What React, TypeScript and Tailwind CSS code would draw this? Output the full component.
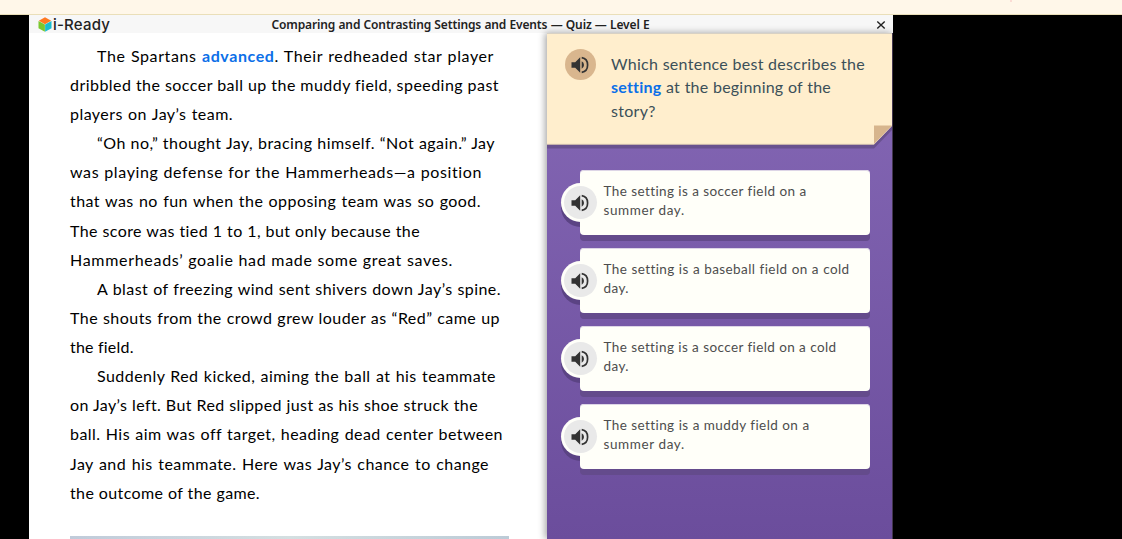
import React from 'react';

type Line = { text: string; width: string; indent?: boolean; bold?: string; tracking?: string };

const passage: Line[] = [
  { text: 'The Spartans |. Their redheaded star player', bold: 'advanced', width: 'w-[397px]', indent: true, tracking: 'tracking-[0.6px]' },
  { text: 'dribbled the soccer ball up the muddy field, speeding past', width: 'w-[429px]' },
  { text: 'players on Jay’s team.', width: 'w-[163px]' },
  { text: '“Oh no,” thought Jay, bracing himself. “Not again.” Jay', width: 'w-[398px]', indent: true },
  { text: 'was playing defense for the Hammerheads—a position', width: 'w-[412px]', tracking: 'tracking-[0.62px]' },
  { text: 'that was no fun when the opposing team was so good.', width: 'w-[411px]' },
  { text: 'The score was tied 1 to 1, but only because the', width: 'w-[350px]', tracking: 'tracking-[0.4px]' },
  { text: 'Hammerheads’ goalie had made some great saves.', width: 'w-[383px]', tracking: 'tracking-[0.7px]' },
  { text: 'A blast of freezing wind sent shivers down Jay’s spine.', width: 'w-[404px]', indent: true },
  { text: 'The shouts from the crowd grew louder as “Red” came up', width: 'w-[430px]' },
  { text: 'the field.', width: 'w-[63px]', tracking: 'tracking-[0.2px]' },
  { text: 'Suddenly Red kicked, aiming the ball at his teammate', width: 'w-[399px]', indent: true },
  { text: 'on Jay’s left. But Red slipped just as his shoe struck the', width: 'w-[408px]', tracking: 'tracking-[0.4px]' },
  { text: 'ball. His aim was off target, heading dead center between', width: 'w-[433px]' },
  { text: 'Jay and his teammate. Here was Jay’s chance to change', width: 'w-[419px]' },
  { text: 'the outcome of the game.', width: 'w-[190px]', tracking: 'tracking-[0.38px]' },
];

const question: Line[] = [
  { text: 'Which sentence best describes the', width: 'w-[254px]' },
  { text: '| at the beginning of the', bold: 'setting', width: 'w-[220px]', tracking: 'tracking-[0.2px]' },
  { text: 'story?', width: 'w-[44px]' },
];

const answers: Line[][] = [
  [
    { text: 'The setting is a soccer field on a', width: 'w-[203px]' },
    { text: 'summer day.', width: 'w-[81px]', tracking: 'tracking-[0.6px]' },
  ],
  [
    { text: 'The setting is a baseball field on a cold', width: 'w-[246px]' },
    { text: 'day.', width: 'w-[26px]' },
  ],
  [
    { text: 'The setting is a soccer field on a cold', width: 'w-[233px]' },
    { text: 'day.', width: 'w-[26px]' },
  ],
  [
    { text: 'The setting is a muddy field on a', width: 'w-[206px]' },
    { text: 'summer day.', width: 'w-[81px]', tracking: 'tracking-[0.6px]' },
  ],
];

const TextLine: React.FC<{ line: Line }> = ({ line }) => {
  const [before, after] = line.text.split('|');
  return (
    <span
      className={`block whitespace-nowrap [text-align-last:justify] ${line.width} ${line.indent ? 'ml-[27px]' : ''} ${line.tracking ?? ''}`}
    >
      {before}
      {line.bold && <b className="font-bold text-[#0b6fe8]">{line.bold}</b>}
      {after}
    </span>
  );
};

const Speaker: React.FC = () => (
  <svg viewBox="0 0 18 18" className="mr-[1px] size-[18px]" fill="#333333">
    <path d="M0.5 6.2H4.2L9.2 1.2V16.8L4.2 11.8H0.5Z" />
    <path d="M10.7 5.3Q13 6.6 13 9T10.7 12.7Z" />
    <path d="M10.7 1.7C14.5 2.3 16.6 5.2 16.6 9S14.5 15.7 10.7 16.3" fill="none" stroke="#333333" strokeWidth="1.7" />
  </svg>
);

const Logo: React.FC = () => (
  <div className="flex items-center">
    <svg viewBox="0 0 14 15" className="h-[15px] w-[14px]">
      <path d="M7 0.2L13.2 3.7L7 7.2L0.8 3.7Z" fill="#ff7920" />
      <path d="M0.5 4L6.9 7.5V14.7L0.5 11.2Z" fill="#7ac82e" />
      <path d="M13.5 4L7.1 7.5V14.7L13.5 11.2Z" fill="#19bdcf" />
    </svg>
    <span className="ml-[1px] font-[Inter] text-[15px] leading-[18px] font-medium tracking-[0.2px] text-[#222222]">
      i-Ready
    </span>
  </div>
);

const App: React.FC = () => {
  return (
    <div className="flex h-[539px] w-[1122px] flex-col overflow-hidden bg-black">
      <div className="h-[15px] shrink-0 border-b border-[#eadfb9] bg-[#fff7e9]">
        <div className="ml-[1010px] h-[2px] w-[2px] bg-[#fbdcd4]" />
      </div>
      <div className="ml-[29px] flex w-[864px] flex-1 flex-col bg-white">
        <header className="flex h-[18px] shrink-0 items-center bg-[#f7f7f7] pt-px pr-[7px] pl-[9px]">
          <div className="w-[233.5px]">
            <Logo />
          </div>
          <h1 className="w-[378px] whitespace-nowrap font-['Noto_Sans'] text-[12px] leading-[18px] font-semibold tracking-[-0.13px] text-[#222222] [text-align-last:justify]">
            Comparing and Contrasting Settings and Events — Quiz — Level E
          </h1>
          <svg viewBox="0 0 10 10" className="ml-auto size-[10px]" stroke="#222222" strokeWidth="1.4">
            <path d="M1.3 1.5L8.7 8.5M8.7 1.5L1.3 8.5" />
          </svg>
        </header>

        <main className="flex flex-1">
          <article className="flex w-[518px] flex-col pt-[7.75px] pl-[41px]">
            <div className="h-[489px] font-[Lato,sans-serif] text-[16px] leading-[29.13px] tracking-[0.45px] text-black">
              {passage.map((line) => (
                <TextLine key={line.text} line={line} />
              ))}
            </div>
            <div className="mt-[6.5px] h-[3px] w-[439px] bg-linear-to-r from-[#c0cbda] via-[#d4dfe1] to-[#bccbd7]" />
          </article>

          <aside className="relative w-[346px] border-r border-[#42364f] bg-linear-to-b from-[#8669b6] to-[#6b4d9c] shadow-[-2px_0_7px_rgba(0,0,0,0.35)]">
            {/* Question note with the folded corner */}
            <div className="relative h-[112px]">
              <svg viewBox="0 0 345 116" className="absolute top-0 left-0 h-[116px] w-[345px]">
                <path d="M0 0H345V97L327 115.5H0Z" fill="#69518f" />
                <path d="M0 0H345V93L327 111.5H0Z" fill="#ffeecd" />
                <path d="M327 92.5H345L327 111Z" fill="#d7b58d" />
                <path d="M0 0.5H345" stroke="#d8d1c4" />
                <path d="M0 111.3H327" stroke="#d4c4aa" strokeWidth="0.7" />
              </svg>
              <div className="relative flex pt-[16px] pl-[18px]">
                <button className="flex size-[31px] items-center justify-center rounded-full bg-[#d9b68e]">
                  <Speaker />
                </button>
                <div className="ml-[15px] pt-[2.8px] font-[Lato,sans-serif] text-[16px] leading-[23.5px] tracking-[0.28px] text-[#3b5059]">
                  {question.map((line) => (
                    <TextLine key={line.text} line={line} />
                  ))}
                </div>
              </div>
            </div>

            <div className="flex flex-col gap-[13px] pt-[25.4px] pl-[14px]">
              {answers.map((lines, i) => (
                <div key={i} className="relative h-[65px]">
                  <div className="absolute top-[18px] left-0 size-[39px] rounded-full bg-[#5b4384]" />
                  <div className="absolute top-0 left-[19px] h-[65px] w-[290px] rounded-[4px] bg-[#fffff9] shadow-[0_6px_0_#644b8c,inset_0_1px_0_#ddd5e6]" />
                  <div className="relative flex">
                    <button className="mt-[13px] flex size-[39px] items-center justify-center rounded-full bg-[#fffff9]">
                      <span className="flex size-[33px] items-center justify-center rounded-full bg-[#e9e9e9]">
                        <Speaker />
                      </span>
                    </button>
                    <div className="ml-[3.5px] pt-[11.6px] font-[Lato,sans-serif] text-[13.5px] leading-[19px] tracking-[0.4px] text-[#4d4d4d]">
                      {lines.map((line) => (
                        <TextLine key={line.text} line={line} />
                      ))}
                    </div>
                  </div>
                </div>
              ))}
            </div>
          </aside>
        </main>
      </div>
    </div>
  );
};

export default App;
